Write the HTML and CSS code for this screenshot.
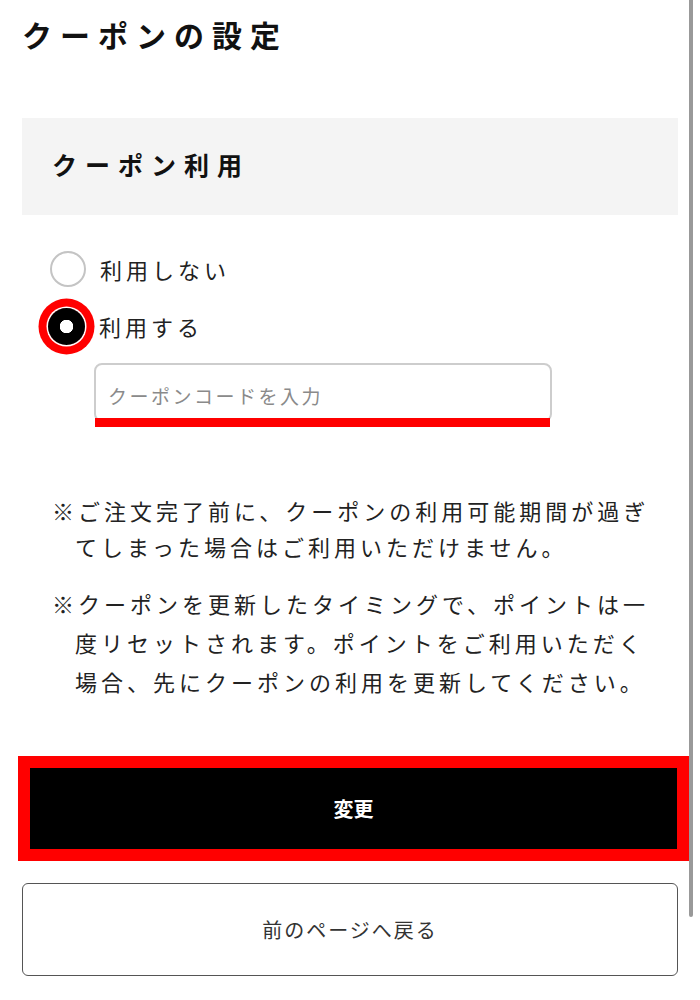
FILE: index.html
```html
<!DOCTYPE html>
<html lang="ja">

<head>
  <meta charset="UTF-8">
  <meta name="viewport" content="width=device-width, initial-scale=1.0">
  <title>クーポンの設定</title>
  <link rel="stylesheet" href="styles.css">
</head>

<body>
  <div class="page">
    <h1 class="title">クーポンの設定</h1>

    <div class="section-head">クーポン利用</div>

    <div class="choices">
      <label class="choice">
        <span class="radio"></span>
        <span class="label">利用しない</span>
      </label>
      <label class="choice">
        <span class="radio checked"></span>
        <span class="label">利用する</span>
      </label>
      <div class="code-box">
        <input class="code" type="text" placeholder="クーポンコードを入力">
        <span class="mark-line"></span>
      </div>
    </div>

    <div class="notes">
      <p>※ご注文完了前に、クーポンの利用可能期間が過ぎてしまった場合はご利用いただけません。</p>
      <p>※クーポンを更新したタイミングで、ポイントは一度リセットされます。ポイントをご利用いただく場合、先にクーポンの利用を更新してください。</p>
    </div>

    <div class="mark-box">
      <button class="btn-submit">変更</button>
    </div>
    <button class="btn-back">前のページへ戻る</button>
  </div>
  <div class="scrollbar"></div>
</body>

</html>
```

FILE: styles.css
```css
body {
  margin: 0;
  background: #fff;
  color: #111;
  font-family: "Noto Sans CJK JP", "Noto Sans", sans-serif;
}

.page {
  padding: 14px 22px 0;
}

.title {
  margin: 0;
  font-size: 30px;
  line-height: 40px;
  font-weight: 700;
  letter-spacing: 8px;
}

.section-head {
  margin-top: 64px;
  height: 97px;
  box-sizing: border-box;
  padding: 0 0 5px 30px;
  background: #f4f4f4;
  display: flex;
  align-items: center;
  font-size: 25px;
  font-weight: 700;
  letter-spacing: 8px;
}

.choices {
  padding-top: 34px;
}

.choice {
  display: flex;
  align-items: center;
  height: 40px;
  margin-bottom: 17px;
  padding-left: 28px;
}

.radio {
  width: 32px;
  height: 32px;
  border: 2px solid #c4c4c4;
  border-radius: 50%;
  margin-right: 14px;
  box-sizing: content-box;
}

.radio.checked {
  margin-left: -2px;
  margin-right: 14px;
  width: 37px;
  height: 37px;
  border: none;
  background: radial-gradient(circle, #fff 0 6.5px, #000 7px);
  box-shadow: 0 0 0 1.5px #fff, 0 0 0 9.5px #f00;
}

.label {
  font-size: 22px;
  letter-spacing: 4px;
  color: #222;
}

.code-box {
  position: relative;
  margin-left: 72px;
  margin-top: 3px;
  width: 458px;
}

.code {
  display: block;
  box-sizing: border-box;
  width: 100%;
  height: 59px;
  border: 2px solid #cdcdcd;
  border-radius: 8px;
  padding: 6px 12px 0;
  font-family: inherit;
  font-size: 19px;
  letter-spacing: 2.5px;
  outline: none;
}

.code::placeholder {
  color: #8a8a8a;
}

/* 赤い下線（注釈） */
.mark-line {
  position: absolute;
  left: 1px;
  right: 2px;
  bottom: -5px;
  height: 9px;
  background: #f00;
}

.notes {
  margin-top: 70px;
  padding: 0 20px 0 30px;
  font-size: 22px;
  line-height: 36px;
  letter-spacing: 4px;
  color: #222;
}

.notes p {
  margin: 0 0 20px;
  padding-left: 23px;
  text-indent: -23px;
}

.notes p:last-child {
  margin-bottom: 0;
  line-height: 39px;
}

.mark-box {
  margin: 55px -11px 0 -4px;
  border: 12px solid #f00;
}

.btn-submit {
  display: block;
  width: 100%;
  height: 81px;
  border: none;
  background: #000;
  color: #fff;
  font-family: inherit;
  font-size: 20px;
  font-weight: 700;
  cursor: pointer;
}

.btn-back {
  display: block;
  width: 656px;
  height: 93px;
  margin-top: 22px;
  background: #fff;
  border: 1.5px solid #555;
  border-radius: 6px;
  color: #333;
  font-family: inherit;
  font-size: 20px;
  letter-spacing: 2px;
  cursor: pointer;
}

.scrollbar {
  position: absolute;
  top: 0;
  left: 689px;
  width: 4px;
  height: 917px;
  background: #999;
  border-radius: 0 0 2px 2px;
}
```
